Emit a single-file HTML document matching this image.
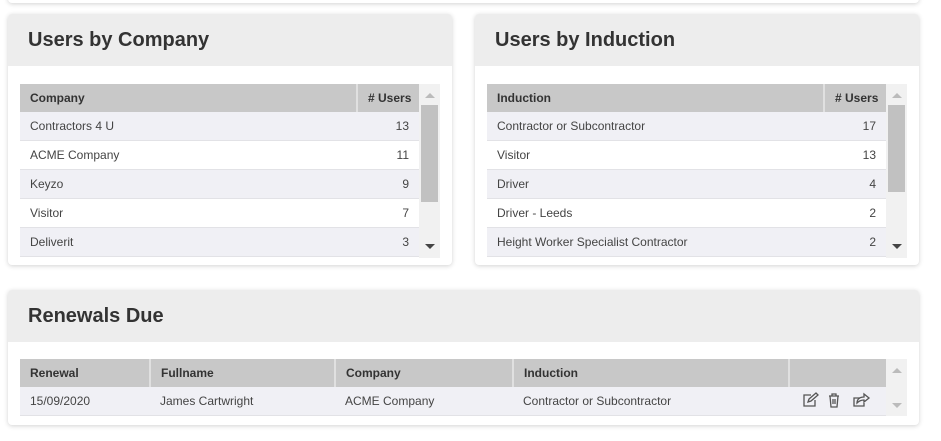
<!DOCTYPE html>
<html><head><style>
body{margin:0;width:941px;height:441px;background:#fff;font-family:"Liberation Sans",Arial,sans-serif;position:relative;overflow:hidden}
.card{position:absolute;background:#fff;border-radius:4px;box-shadow:0 1px 5px rgba(0,0,0,.18);overflow:hidden}
.hd{height:52px;background:#ededed;font-size:20px;font-weight:bold;color:#333;line-height:52px;padding-left:20px;box-sizing:border-box}
table{position:absolute;border-collapse:collapse;font-size:12px;color:#444;table-layout:fixed}
th{background:#c8c8c8;height:28px;text-align:left;padding:0 10px;font-weight:bold;color:#333;border-left:2px solid #e0e0e0;white-space:nowrap}
th:first-child{border-left:none}
td{height:28px;padding:0 10px;border-bottom:1px solid #e2e2e6;white-space:nowrap}
tr:nth-child(even) td{background:#f0f0f5}
.r{text-align:right}
.sb{position:absolute;width:21px;background:#f1f1f1}
.th{position:absolute;left:2px;width:17px;background:#c1c1c1}
.up,.dn{position:absolute;left:6px;width:0;height:0;border-left:5px solid transparent;border-right:5px solid transparent}
.up{border-bottom:5px solid #bbb}
.dn{border-top:5px solid #444}
</style></head><body>
<div class="card" style="left:8px;top:-30px;width:911px;height:33px"></div>

<div class="card" style="left:8px;top:14px;width:444px;height:251px">
<div class="hd">Users by Company</div>
<table style="left:12px;top:70px;width:399px">
<colgroup><col style="width:337px"><col></colgroup>
<tr><th>Company</th><th class="r"># Users</th></tr>
<tr><td>Contractors 4 U</td><td class="r">13</td></tr>
<tr><td>ACME Company</td><td class="r">11</td></tr>
<tr><td>Keyzo</td><td class="r">9</td></tr>
<tr><td>Visitor</td><td class="r">7</td></tr>
<tr><td>Deliverit</td><td class="r">3</td></tr>
</table>
<div class="sb" style="left:411px;top:70px;height:174px"><div class="up" style="top:9px"></div><div class="th" style="top:21px;height:97px"></div><div class="dn" style="top:160px"></div></div>
</div>

<div class="card" style="left:475px;top:14px;width:444px;height:251px">
<div class="hd">Users by Induction</div>
<table style="left:12px;top:70px;width:399px">
<colgroup><col style="width:337px"><col></colgroup>
<tr><th>Induction</th><th class="r"># Users</th></tr>
<tr><td>Contractor or Subcontractor</td><td class="r">17</td></tr>
<tr><td>Visitor</td><td class="r">13</td></tr>
<tr><td>Driver</td><td class="r">4</td></tr>
<tr><td>Driver - Leeds</td><td class="r">2</td></tr>
<tr><td>Height Worker Specialist Contractor</td><td class="r">2</td></tr>
</table>
<div class="sb" style="left:411px;top:70px;height:174px"><div class="up" style="top:9px"></div><div class="th" style="top:21px;height:87px"></div><div class="dn" style="top:160px"></div></div>
</div>

<div class="card" style="left:8px;top:290px;width:911px;height:135px">
<div class="hd">Renewals Due</div>
<table style="left:12px;top:69px;width:866px">
<colgroup><col style="width:130px"><col style="width:185px"><col style="width:178px"><col style="width:276px"><col></colgroup>
<tr><th>Renewal</th><th>Fullname</th><th>Company</th><th>Induction</th><th></th></tr>
<tr><td>15/09/2020</td><td>James Cartwright</td><td>ACME Company</td><td>Contractor or Subcontractor</td><td style="text-align:right;padding-right:14px">
<svg width="70" height="16" viewBox="0 0 70 16" fill="none" stroke="#555" stroke-width="1.3">
<path d="M9 3H2v11h11V8"/><path d="M6 10l1-3 7-6 2 2-7 6z"/>
<path d="M27 4h10M30 4V2h4v2M28 4l1 11h6l1-11M31 7v5M33 7v5"/>
<path d="M58 6H52v8h10v-3"/><path d="M55 11c0-4 3-6 7-6V2l5 4-5 4V8c-3 0-5 1-7 3z"/>
</svg></td></tr>
</table>
<div class="sb" style="left:878px;top:69px;height:57px"><div class="up" style="top:9px"></div><div class="dn" style="top:44px;border-top-color:#bbb"></div></div>
</div>
</body></html>
